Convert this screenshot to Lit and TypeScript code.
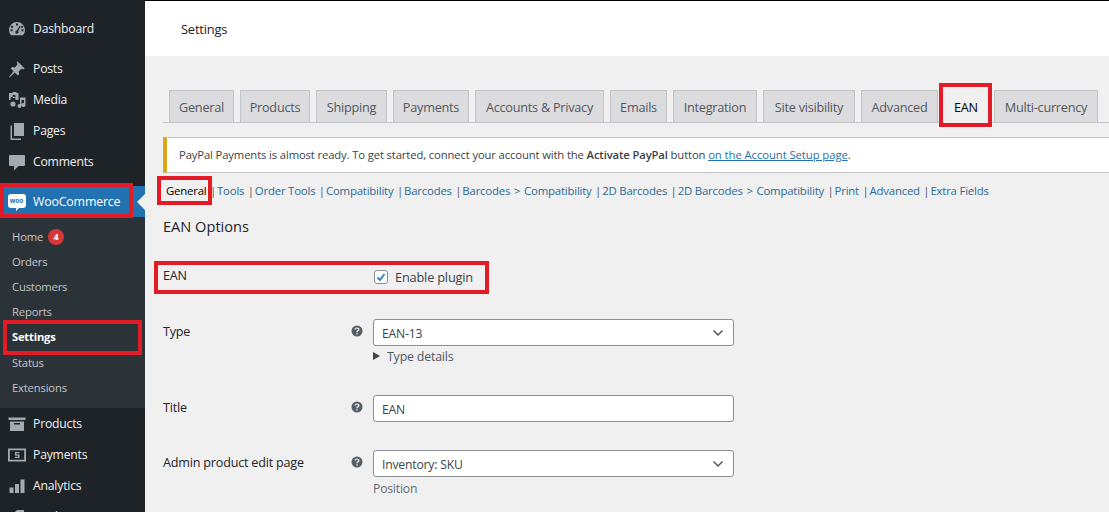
import { LitElement, html, css, svg } from "lit";
import { customElement } from "lit/decorators.js";

const icons: Record<string, unknown> = {
  dash: svg`<path fill-rule="evenodd" d="M10 3a8 8 0 0 0-8 8c0 2 .8 3.9 2 5.2h12A8 8 0 0 0 10 3zM9 4.600h2v2H9zM5 6.400l1.500 1.500-1.400 1.400-1.500-1.500zm10 0 1.400 1.400-1.500 1.500-1.400-1.400zM3.500 10.200h2v2h-2zm11 0h2v2h-2zM12.400 7l1 .6-2.200 4.600a1.600 1.600 0 1 1-1.300-.7z"/>`,
  pin: svg`<path d="M10.400 2.300 17.700 9.600 16.200 10.400 15 9.500 11.700 12.300 12.100 15.300 10.800 16.600 7.900 13.600 2.400 18.400 2 18 6.600 12.300 3.700 9.400 5 8.100 8 8.600 10.700 5.100 9.700 3.900z"/>`,
  media: svg`<path fill-rule="evenodd" d="M2 3h3l1-1h3l1 1h1.500v7H8.500V9a2.500 2.500 0 0 0-5 0v1H2zm5 1.800a1.700 1.700 0 1 0 .01 0z"/><circle cx="6" cy="14" r="2.600"/><path d="M13 7.500h5.500V15a2 2 0 1 1-1.500-2v-3h-2.500v6a2 2 0 1 1-1.500-2z"/>`,
  pages: svg`<path d="M7 2h10v13H7z"/><path d="M5 4.500v13h9V19H3.500V4.500z"/>`,
  comment: svg`<path d="M3 3h14a1 1 0 0 1 1 1v9a1 1 0 0 1-1 1h-5.500L7 18.500V14H3a1 1 0 0 1-1-1V4a1 1 0 0 1 1-1z"/>`,
  box: svg`<path d="M1.500 3.500h17v2.500h-17zM3 7.500h14V17H3zM7 9v1.500h6V9z" fill-rule="evenodd"/>`,
  pay: svg`<path fill-rule="evenodd" d="M1 3.500h18v13H1zm1.800 1.800v9.400h14.400V5.300zM8 7h4.500v1.300H9.300v1.100h3.200v3.700H8v-1.300h3.200v-1.100H8z"/>`,
  bars: svg`<path d="M2.500 11.500h4V17h-4zM8 8h4v9H8zM13.500 3.500h4V17h-4z"/>`,
  tag: svg`<path d="M3 9.500 10 3h7v7l-7 7zM14 5a1.300 1.300 0 1 0 .01 0z" fill-rule="evenodd"/>`,
};

interface MenuItem { label: string; icon: string }
const top1: MenuItem[] = [{ label: "Dashboard", icon: "dash" }];
const top2: MenuItem[] = [
  { label: "Posts", icon: "pin" },
  { label: "Media", icon: "media" },
  { label: "Pages", icon: "pages" },
  { label: "Comments", icon: "comment" },
];
const top3: MenuItem[] = [
  { label: "Products", icon: "box" },
  { label: "Payments", icon: "pay" },
  { label: "Analytics", icon: "bars" },
  { label: "Marketing", icon: "tag" },
];
const subs = ["Orders", "Customers", "Reports"];
const tabs = ["General", "Products", "Shipping", "Payments", "Accounts & Privacy", "Emails", "Integration", "Site visibility", "Advanced", "EAN", "Multi-currency"];
const widths = [65, 70, 71, 76, 129, 57, 84, 92, 77, 44, 104];
const links = ["Tools", "Order Tools", "Compatibility", "Barcodes", "Barcodes > Compatibility", "2D Barcodes", "2D Barcodes > Compatibility", "Print", "Advanced", "Extra Fields"];

const marks = [
  { x: 0, y: 183, w: 133, h: 35 },
  { x: 3, y: 320, w: 139, h: 35 },
  { x: 939, y: 83, w: 53, h: 44 },
  { x: 157, y: 176, w: 55, h: 29 },
  { x: 154, y: 261, w: 335, h: 33 },
];

@customElement("app-root")
export class AppRoot extends LitElement {
  static styles = css`
    :host { display: block; width: 1109px; height: 512px; position: relative; overflow: hidden; background: #f0f0f1;
      font-family: "Open Sans", "Noto Sans", sans-serif; font-size: 12.2px; color: #3c434a; letter-spacing: -0.2px; }
    .page { display: flex; height: 512px; }
    .side { width: 145px; flex: none; background: #1d2327; color: #f0f0f1; padding-top: 13px; box-sizing: border-box; overflow: hidden; }
    .group { display: flex; flex-direction: column; }
    .g1, .g2 { margin-bottom: 9px; }
    .item { height: 31px; display: flex; align-items: center; color: #f0f0f1; }
    .ico { width: 33px; flex: none; display: flex; justify-content: center; }
    .ico svg { width: 20px; height: 20px; fill: #a7aaad; margin-left: 1px; }
    .woo { height: 31px; background: #2271b1; color: #fff; display: flex; align-items: center; position: relative; font-size: 12.400px; }
    .woo::after { content: ""; position: absolute; right: 0; top: 8px; border: 8px solid transparent; border-right-color: #f0f0f1; border-left-width: 0; }
    .woologo { width: 18px; height: 14px; background: #fff; border-radius: 3px; position: relative; display: flex; align-items: center; justify-content: center; color: #2271b1; font-size: 6.500px; font-weight: 700; letter-spacing: 0; font-style: normal; margin-bottom: 2px; }
    .woologo::after { content: ""; position: absolute; left: 8px; bottom: -3px; border: 2px solid transparent; border-top: 2px solid #fff; border-left: 2px solid #fff; }
    .sub { background: #2c3338; padding: 7px 0 8.400px; display: flex; flex-direction: column; color: #c3c4c7; font-size: 11.300px; }
    .sub div { height: 25.100px; display: flex; align-items: center; padding-left: 12px; gap: 5px; }
    .sub .cur { color: #fff; font-weight: 700; font-size: 11.200px; }
    .badge { width: 16px; height: 16px; border-radius: 50%; background: #d63638; color: #fff; font-size: 9px; font-weight: 700; display: flex; align-items: center; justify-content: center; letter-spacing: 0; }
    .main { flex: 1; min-width: 0; display: flex; flex-direction: column; }
    .head { height: 56px; background: #fff; border-top: 1px solid #000; box-sizing: border-box; display: flex; align-items: center; padding: 1px 0 0 36px; color: #1d2327; font-size: 12.900px; }
    .content { padding: 34px 0 0 18px; display: flex; flex-direction: column; }
    .tabs { display: flex; gap: 6px; height: 32px; padding-left: 6px; border-bottom: 1px solid #c3c4c7; }
    .tab { height: 32px; box-sizing: border-box; border: 1px solid #c3c4c7; border-bottom: none; background: #dcdcde; color: #50575e; font-weight: 500; font-size: 12.700px; display: flex; align-items: center; justify-content: center; letter-spacing: -0.25px; white-space: nowrap; }
    .tab.on { background: #f0f0f1; color: #000; height: 33px; border-color: #f0f0f1; }
    .notice { margin-top: 14px; height: 36px; box-sizing: border-box; background: #fff; border: 1px solid #c3c4c7; border-left: 4px solid #dba617; border-right: none; display: flex; align-items: center; padding: 0 0 2px 12px; font-size: 11.270px; letter-spacing: -0.13px; white-space: pre; }
    .notice b { font-weight: 600; }
    .notice a { color: #2271b1; text-decoration: underline; letter-spacing: -0.06px; }
    .subnav { margin-top: 7px; height: 20px; display: flex; align-items: center; font-size: 11.400px; color: #2c6a94; white-space: pre; padding-left: 3px; }
    .subnav .sep { color: #50575e; width: 10.500px; padding-right: 1px; box-sizing: border-box; text-align: right; }
    .subnav b { color: #000; font-weight: 500; }
    .gt { margin: 0 1px; }
    h2 { margin: 16px 0 0; font-size: 14.600px; line-height: 20px; font-weight: 500; color: #1d2327; letter-spacing: 0; }
    .row { display: flex; align-items: flex-start; }
    .lab { width: 189px; flex: none; color: #1d2327; font-weight: 500; font-size: 12.600px; line-height: 26px; }
    .tip { width: 21px; flex: none; display: flex; margin-left: -1px; padding-top: 6px; box-sizing: content-box; }
    .tip svg { width: 12px; height: 12px; fill: #555d66; }
    .check { display: flex; align-items: center; gap: 7px; margin: 2px 0 0 22px; font-size: 12.800px; color: #3c434a; }
    .box { width: 14px; height: 14px; border: 1px solid #8c8f94; border-radius: 3px; background: #fff; box-sizing: border-box; display: flex; }
    .box svg { width: 12px; height: 12px; fill: none; stroke: #3582c4; stroke-width: 2; }
    .field { width: 361px; height: 27px; box-sizing: border-box; margin-left: 1px; background: #fff; border: 1px solid #8c8f94; border-radius: 3px; display: flex; align-items: center; justify-content: space-between; padding: 1px 8px 0; font-size: 12.200px; color: #3c434a; }
    .field svg { width: 12px; height: 8px; fill: none; stroke: #50575e; stroke-width: 1.500; margin-right: 1px; }
    .r-ean { margin-top: 30px; height: 20px; align-items: center; }
    .r-type { margin-top: 33px; }
    .r-admin { margin-top: 28px; }
    .col { display: flex; flex-direction: column; }
    .det { height: 20px; margin-left: 1px; display: flex; align-items: center; gap: 7px; font-size: 12.400px; color: #50575e; }
    .det i { border: 4px solid transparent; border-left: 7px solid #3c434a; border-right: 0; }
    .desc { height: 23px; margin-left: 1px; display: flex; align-items: center; font-size: 12.200px; color: #646970; }
    .gap1 { height: 29px; }
    .mark { position: absolute; box-sizing: border-box; border: 4px solid #e21c26; pointer-events: none; }
  `;

  private icon(n: string) {
    return html`<span class="ico"><svg viewBox="0 0 20 20">${icons[n]}</svg></span>`;
  }
  private tip() {
    return html`<div class="tip"><svg viewBox="0 0 12 12"><path fill-rule="evenodd" d="M6 .5a5.500 5.500 0 1 0 0 11 5.500 5.500 0 0 0 0-11zM5.300 8.300h1.400v1.300H5.300zM6 2.400c1.500 0 2.500.8 2.500 2 0 .9-.5 1.300-1 1.700-.5.300-.8.600-.8 1.200H5.300c0-1 .4-1.500 1-1.900.4-.3.7-.5.7-1s-.4-.8-1-.8-1.100.4-1.100 1H3.500C3.500 3.300 4.500 2.400 6 2.400z"/></svg></div>`;
  }
  private chev() {
    return html`<svg viewBox="0 0 12 8"><path d="M1.500 1.500 6 6l4.500-4.500"/></svg>`;
  }
  private items(list: MenuItem[]) {
    return list.map((m) => html`<div class="item">${this.icon(m.icon)}<span>${m.label}</span></div>`);
  }
  private link(l: string) {
    const parts = l.split(" > ");
    return parts.length === 2
      ? html`<span>${parts[0]} <span class="gt">&gt;</span> ${parts[1]}</span>`
      : html`<span>${l}</span>`;
  }

  render() {
    return html`
      <div class="page">
        <nav class="side">
          <div class="group g1">${this.items(top1)}</div>
          <div class="group g2">${this.items(top2)}</div>
          <div class="woo"><span class="ico"><i class="woologo">woo</i></span><span>WooCommerce</span></div>
          <div class="sub">
            <div>Home<span class="badge">4</span></div>
            ${subs.map((s) => html`<div>${s}</div>`)}
            <div class="cur">Settings</div>
            <div>Status</div>
            <div>Extensions</div>
          </div>
          <div class="group">${this.items(top3)}</div>
        </nav>
        <main class="main">
          <header class="head">Settings</header>
          <div class="content">
            <div class="tabs">
              ${tabs.map((t, i) => html`<div class="tab ${t === "EAN" ? "on" : ""}" style="width:${widths[i]}px">${t}</div>`)}
            </div>
            <div class="notice">PayPal Payments is almost ready. To get started, connect your account with the <b>Activate PayPal</b> button <a>on the Account Setup page</a>.</div>
            <div class="subnav"><b>General</b>${links.map((l) => html`<span class="sep">|</span>${this.link(l)}`)}</div>
            <h2>EAN Options</h2>
            <div class="row r-ean"><div class="lab">EAN</div><div class="check"><span class="box"><svg viewBox="0 0 12 12"><path d="M2.500 6.500 5 9l4.500-6"/></svg></span>Enable plugin</div></div>
            <div class="row r-type"><div class="lab">Type</div>${this.tip()}<div class="col"><div class="field">EAN-13${this.chev()}</div><div class="det"><i></i>Type details</div><div class="gap1"></div></div></div>
            <div class="row"><div class="lab">Title</div>${this.tip()}<div class="field">EAN</div></div>
            <div class="row r-admin"><div class="lab">Admin product edit page</div>${this.tip()}<div class="col"><div class="field">Inventory: SKU${this.chev()}</div><div class="desc">Position</div></div></div>
          </div>
        </main>
      </div>
      ${marks.map((m) => html`<div class="mark" style="left:${m.x}px;top:${m.y}px;width:${m.w}px;height:${m.h}px"></div>`)}
    `;
  }
}
